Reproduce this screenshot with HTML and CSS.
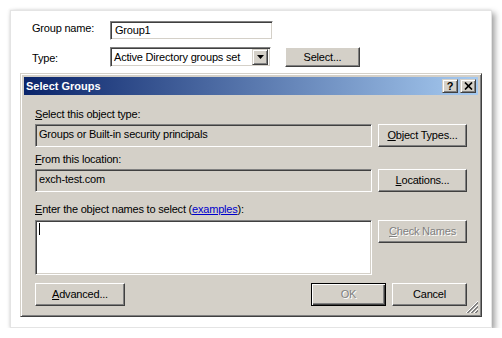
FILE: index.html
```html
<!DOCTYPE html>
<html>
<head>
<meta charset="utf-8">
<link rel="stylesheet" href="styles.css">
</head>
<body>
<div class="panel">
  <div class="form">
    <div class="row">
      <span class="row-label lbl-name">Group name:</span>
      <div class="sunken edit">Group1</div>
    </div>
    <div class="row">
      <span class="row-label lbl-type">Type:</span>
      <div class="sunken combo">
        <span class="combo-text">Active Directory groups set</span>
        <span class="raised drop"><svg width="7" height="4" viewBox="0 0 7 4"><polygon points="0,0 7,0 3.5,4" fill="#000"/></svg></span>
      </div>
      <button class="btn btn-select">Select...</button>
    </div>
  </div>

  <div class="dialog">
    <div class="titlebar">
      <span class="title">Select Groups</span>
      <div class="tbtns">
        <span class="raised tbtn help">?</span>
        <span class="raised tbtn"><svg width="9" height="8" viewBox="0 0 9 8"><path d="M1 0.5 L8 7.5 M8 0.5 L1 7.5" stroke="#000" stroke-width="1.7" fill="none"/></svg></span>
      </div>
    </div>
    <div class="dbody">
      <div class="lab"><u>S</u>elect this object type:</div>
      <div class="frow">
        <div class="sunken field">Groups or Built-in security principals</div>
        <button class="btn btn-side"><u>O</u>bject Types...</button>
      </div>
      <div class="lab lab-2"><u>F</u>rom this location:</div>
      <div class="frow">
        <div class="sunken field">exch-test.com</div>
        <button class="btn btn-side"><u>L</u>ocations...</button>
      </div>
      <div class="lab lab-3"><u>E</u>nter the object names to select (<a class="link" href="#">examples</a>):</div>
      <div class="frow frow-names">
        <div class="sunken names"><span class="caret"></span></div>
        <button class="btn btn-side disabled"><u>C</u>heck Names</button>
      </div>
      <div class="actions">
        <button class="btn btn-adv"><u>A</u>dvanced...</button>
        <span class="spacer"></span>
        <button class="btn btn-ok disabled">OK</button>
        <button class="btn btn-cancel">Cancel</button>
      </div>
    </div>
    <svg class="grip" width="12" height="12" viewBox="0 0 12 12" shape-rendering="crispEdges">
      <path d="M12 0 L0 12 M12 4 L4 12 M12 8 L8 12" stroke="#fff" stroke-width="1"/>
      <path d="M12 1 L1 12 M12 2 L2 12 M12 5 L5 12 M12 6 L6 12 M12 9 L9 12 M12 10 L10 12" stroke="#808080" stroke-width="1"/>
    </svg>
  </div>
</div>
</body>
</html>
```
FILE: styles.css
```css
* { box-sizing: border-box; }

body {
  margin: 0;
  background: #fff;
  font-family: "Liberation Sans", Arial, sans-serif;
  font-size: 11px;
  line-height: 13px;
  letter-spacing: -0.2px;
  color: #000;
}

.panel {
  margin: 10px 0 0 10px;
  width: 482px;
  height: 318px;
  background: #fff;
  border: 1px solid #e4e4e4;
  box-shadow: 3px 3px 6px rgba(0, 0, 0, 0.38), -1px -1px 2px rgba(0, 0, 0, 0.06);
  display: flex;
  flex-direction: column;
}

.form {
  padding: 10px 0 0 21px;
  display: flex;
  flex-direction: column;
  gap: 7px;
}

.row {
  display: flex;
  align-items: flex-start;
}

.row-label { width: 78px; }
.lbl-name { margin-top: 1px; }
.lbl-type { margin-top: 5px; }

.sunken {
  border: 1px solid;
  border-color: #808080 #fff #fff #808080;
  box-shadow: inset 1px 1px #404040, inset -1px -1px #d4d0c8;
}

.raised {
  border: 1px solid;
  border-color: #d4d0c8 #404040 #404040 #d4d0c8;
  box-shadow: inset 1px 1px #fff, inset -1px -1px #808080;
  background: #d4d0c8;
}

.edit {
  width: 163px;
  height: 19px;
  background: #fff;
  padding: 0 3px 0 4px;
  display: flex;
  align-items: center;
}

.combo {
  width: 161px;
  height: 20px;
  background: #fff;
  padding: 2px 2px 2px 3px;
  display: flex;
  align-items: center;
}

.combo-text { flex: 1; }

.drop {
  width: 16px;
  height: 16px;
  display: flex;
  align-items: center;
  justify-content: center;
}

.btn {
  font: inherit;
  letter-spacing: inherit;
  color: #000;
  background: #d4d0c8;
  border: 1px solid;
  border-color: #fff #404040 #404040 #fff;
  box-shadow: inset -1px -1px #808080;
  padding: 0;
  margin: 0;
  display: flex;
  align-items: center;
  justify-content: center;
}

.btn-select {
  margin-left: 14px;
  width: 75px;
  height: 20px;
}

.dialog {
  position: relative;
  margin: 6px 0 0 9px;
  width: 462px;
  height: 244px;
  background: #d4d0c8;
  border: 1px solid;
  border-color: #d4d0c8 #404040 #404040 #d4d0c8;
  box-shadow: inset 1px 1px #fff, inset -1px -1px #808080;
  padding: 3px;
  display: flex;
  flex-direction: column;
}

.titlebar {
  height: 18px;
  background: linear-gradient(to right, #0a246a, #a6caf0);
  display: flex;
  align-items: center;
  padding: 0 2px 0 2px;
}

.title {
  flex: 1;
  color: #fff;
  font-weight: bold;
  letter-spacing: 0;
}

.tbtns {
  display: flex;
  gap: 2px;
}

.tbtn {
  width: 16px;
  height: 14px;
  display: flex;
  align-items: center;
  justify-content: center;
}

.help {
  font-weight: bold;
  font-size: 11px;
  line-height: 12px;
  letter-spacing: 0;
}

.dbody {
  flex: 1;
  padding: 13px 11px 0 11px;
  display: flex;
  flex-direction: column;
}

.lab { height: 13px; white-space: nowrap; }
.lab-2 { margin-top: 6px; }
.lab-3 { margin-top: 11px; }

.link { color: #0000cc; text-decoration: underline; }

.frow {
  display: flex;
  gap: 6px;
  margin-top: 3px;
  align-items: flex-start;
}

.frow-names { margin-top: 4px; }

.field {
  width: 337px;
  height: 23px;
  padding: 3px 3px 0 3px;
  background: #d4d0c8;
  white-space: nowrap;
}

.btn-side {
  width: 89px;
  height: 23px;
}

.names {
  width: 337px;
  height: 55px;
  background: #fff;
  padding: 2px 0 0 2px;
}

.caret {
  display: block;
  margin-left: 1px;
  width: 1px;
  height: 12px;
  background: #000;
}

.disabled {
  color: #808080;
  text-shadow: 1px 1px #fff;
}

.actions {
  display: flex;
  margin-top: 8px;
  gap: 6px;
}

.spacer { flex: 1; }

.btn-adv { width: 90px; height: 23px; }
.btn-cancel { width: 75px; height: 23px; }

.btn-ok {
  width: 75px;
  height: 23px;
  border: 1px solid #000;
  box-shadow: inset 1px 1px #fff, inset -1px -1px #404040, inset -2px -2px #808080;
}

.grip {
  position: absolute;
  right: 3px;
  bottom: 3px;
}
```
